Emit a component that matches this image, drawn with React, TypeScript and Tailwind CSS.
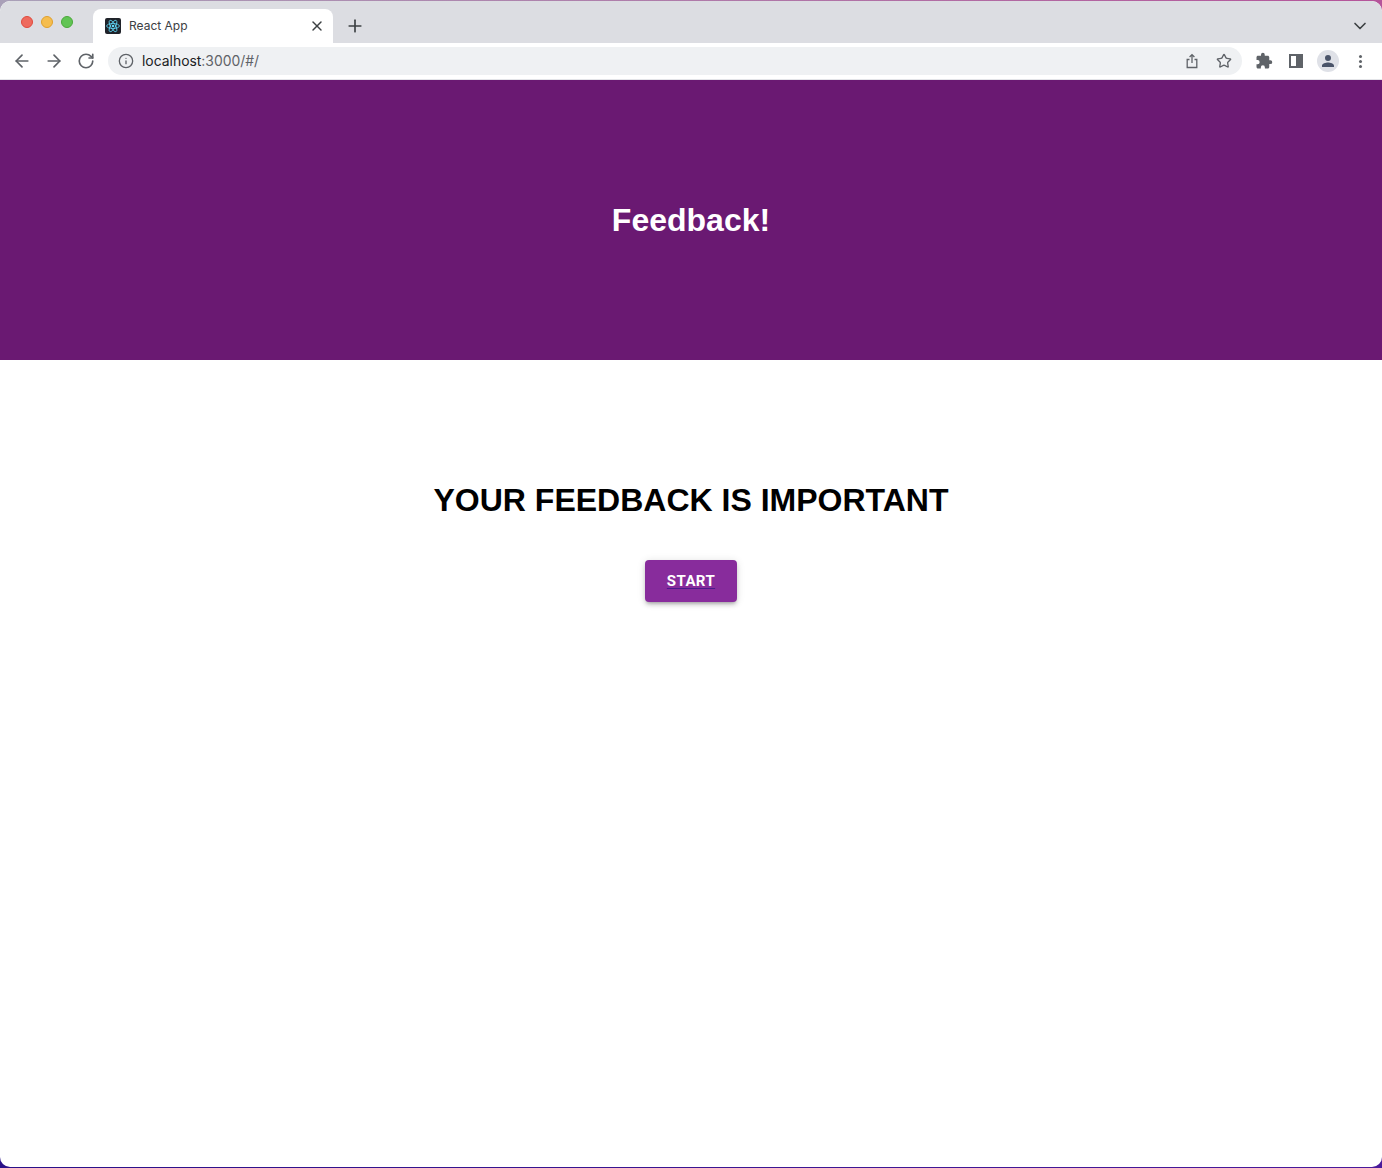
import React from "react";
import { ArrowLeft, ArrowRight, ChevronDown, Info, Plus, RotateCw, Star, X } from "lucide-react";

const ReactFavicon = () => (
  <svg viewBox="0 0 16 16" className="h-4 w-4 rounded-[2px] bg-[#20232a]">
    <g fill="none" stroke="#61dafb" strokeWidth="0.8">
      <ellipse cx="8" cy="8" rx="6.4" ry="2.5" />
      <ellipse cx="8" cy="8" rx="6.4" ry="2.5" transform="rotate(60 8 8)" />
      <ellipse cx="8" cy="8" rx="6.4" ry="2.5" transform="rotate(120 8 8)" />
    </g>
    <circle cx="8" cy="8" r="1.3" fill="#61dafb" />
  </svg>
);

const ShareIcon = () => (
  <svg viewBox="0 0 16 16" className="h-4 w-4" fill="none" stroke="#5f6368" strokeWidth="1.3">
    <path d="M5.500 6.500H3.200v8h9.600v-8h-2.300" />
    <path d="M8 10V1.800M5.600 4 8 1.600 10.400 4" />
  </svg>
);

const PuzzleIcon = () => (
  <svg viewBox="0 0 24 24" className="h-[18px] w-[18px]" fill="#5f6368">
    <path d="M20.500 11H19V7c0-1.100-.9-2-2-2h-4V3.500a2.500 2.500 0 0 0-5 0V5H4c-1.100 0-2 .9-2 2v3.800h1.500a2.700 2.700 0 0 1 0 5.400H2V20c0 1.100.9 2 2 2h3.800v-1.500a2.700 2.700 0 0 1 5.400 0V22H17c1.100 0 2-.9 2-2v-4h1.500a2.500 2.500 0 0 0 0-5z" />
  </svg>
);

const SidePanelIcon = () => (
  <div className="flex h-[14px] w-[14px] border-2 border-[#5f6368] bg-white">
    <div className="ml-auto h-full w-[5px] bg-[#5f6368]" />
  </div>
);

const ProfileIcon = () => (
  <div className="flex h-[22px] w-[22px] items-center justify-center rounded-full bg-[#dfe1e7]">
    <svg viewBox="0 0 24 24" className="h-[18px] w-[18px]" fill="#4a5469">
      <path d="M12 12a4 4 0 1 0 0-8 4 4 0 0 0 0 8zm0 2c-3 0-8 1.500-8 4.200V20h16v-1.800c0-2.700-5-4.200-8-4.200z" />
    </svg>
  </div>
);

const KebabIcon = () => (
  <div className="flex flex-col gap-[2px]">
    <span className="h-[3px] w-[3px] rounded-full bg-[#5f6368]" />
    <span className="h-[3px] w-[3px] rounded-full bg-[#5f6368]" />
    <span className="h-[3px] w-[3px] rounded-full bg-[#5f6368]" />
  </div>
);

const TabStrip = () => (
  <div className="flex h-[42px] items-end rounded-t-[10px] bg-[#dcdde2] pr-[12px]">
    <div className="mb-[15px] ml-[21px] flex gap-[8px]">
      <span className="h-3 w-3 rounded-full border border-[#e0493c] bg-[#ee6a5e]" />
      <span className="h-3 w-3 rounded-full border border-[#e0a02c] bg-[#f5bd4f]" />
      <span className="h-3 w-3 rounded-full border border-[#4aa83a] bg-[#61c454]" />
    </div>
    <div className="ml-[20px] flex h-[34px] w-[240px] items-center rounded-t-[8px] bg-white pl-[12px] pr-[8px]">
      <ReactFavicon />
      <span className="ml-2 text-[12px] text-[#3c4043] [font-family:'Inter',sans-serif]">React App</span>
      <X className="ml-auto h-4 w-4 text-[#3c4043]" strokeWidth={2.2} />
    </div>
    <Plus className="mb-[7px] ml-[12px] h-5 w-5 text-[#3c4043]" strokeWidth={2} />
    <ChevronDown className="mb-[7px] ml-auto h-5 w-5 text-[#3c4043]" strokeWidth={2} />
  </div>
);

const Toolbar = () => (
  <div className="flex h-[37px] items-center border-b border-[#e3e4e8] bg-white pl-[12px] pr-[6px]">
    <div className="flex w-[96px] gap-[12px] text-[#5f6368]">
      <ArrowLeft className="h-5 w-5" strokeWidth={2} />
      <ArrowRight className="h-5 w-5" strokeWidth={2} />
      <RotateCw className="h-[18px] w-[18px] translate-x-[1px] translate-y-[1px]" strokeWidth={2.2} />
    </div>
    <div className="flex h-[28px] w-[1134px] items-center rounded-full bg-[#eff1f3] pl-[10px] pr-[10px]">
      <Info className="h-4 w-4 text-[#5f6368]" strokeWidth={2} />
      <span className="ml-[8px] text-[13.9px] text-[#202124] [font-family:'Inter',sans-serif]">
        localhost<span className="text-[#5f6368]">:3000/#/</span>
      </span>
      <div className="ml-auto flex items-center gap-[16px]">
        <ShareIcon />
        <Star className="h-4 w-4 text-[#5f6368]" strokeWidth={2} />
      </div>
    </div>
    <div className="ml-[6px] grid flex-1 grid-cols-4 items-center justify-items-center">
      <PuzzleIcon />
      <SidePanelIcon />
      <ProfileIcon />
      <KebabIcon />
    </div>
  </div>
);

export default function App() {
  return (
    <div className="flex h-[1168px] w-full flex-col [font-family:'Liberation_Sans',sans-serif] [background:linear-gradient(90deg,#a9a0b8,#b5549a)_top/100%_50%_no-repeat,linear-gradient(90deg,#2a1188,#4a1a9a)_bottom/100%_50%_no-repeat] py-px">
      <div className="flex h-full flex-col overflow-hidden rounded-[10px] bg-white">
        <TabStrip />
        <Toolbar />
        <header className="flex h-[280px] items-center justify-center bg-[#6a1972]">
          <h1 className="text-[32px] font-bold text-white">Feedback!</h1>
        </header>
        <main className="flex flex-1 flex-col items-center pt-[120px]">
          <h2 className="text-[32px] leading-[40px] font-bold text-black">YOUR FEEDBACK IS IMPORTANT</h2>
          <a
            href="#/"
            className="mt-[40px] flex h-[42px] w-[92px] items-center justify-center rounded-[4px] bg-[#882c9c] text-[15px] font-bold tracking-[0.4px] text-white underline decoration-[#4b1a8c] underline-offset-[2px] shadow-[0_3px_3px_-2px_rgba(0,0,0,0.2),0_3px_4px_0_rgba(0,0,0,0.14),0_1px_8px_0_rgba(0,0,0,0.12)] [font-family:'Roboto',sans-serif]"
          >
            START
          </a>
        </main>
      </div>
    </div>
  );
}
